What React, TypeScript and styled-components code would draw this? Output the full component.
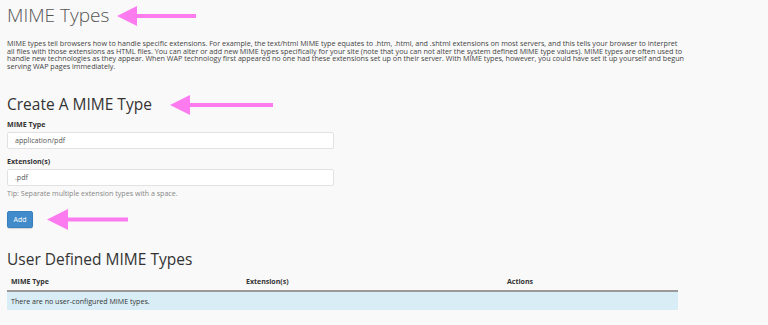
import styled, { createGlobalStyle } from 'styled-components';

const GlobalStyle = createGlobalStyle`
	html, body {
		margin: 0;
		padding: 0;
		background: #f9f9f9;
	}
	body {
		font-family: "Open Sans", "Liberation Sans", sans-serif;
		color: #333;
	}
`

const Page = styled.div`
	width: 768px;
	height: 325px;
	padding: 0 7px;
	box-sizing: border-box;
	overflow: hidden;
`

const TitleRow = styled.div`
	display: flex;
	align-items: center;
	gap: ${props => props.gap || 15}px;
	margin-top: ${props => props.top || 0}px;
`

const PageTitle = styled.h1`
	font-size: 19px;
	font-weight: 300;
	color: #555;
	line-height: 25px;
	margin: 0;
`

const SectionTitle = styled.h2`
	font-size: 15.5px;
	font-weight: 400;
	color: #333;
	line-height: 19px;
	margin: 0;
`

const Intro = styled.p`
	font-size: 7.2px;
	line-height: 7.7px;
	color: #444;
	width: 700px;
	white-space: nowrap;
	margin: 12px 0 0;
`

const Form = styled.form`
	display: flex;
	flex-direction: column;
	margin-top: 5px;
`

const Label = styled.label`
	font-size: 7.1px;
	font-weight: 700;
	color: #333;
	line-height: 9px;
	margin: ${props => props.top || 0}px 0 3px;
`

const Input = styled.input`
	width: 327px;
	height: 17px;
	box-sizing: border-box;
	border: 1px solid #e2e2e2;
	border-radius: 2px;
	background: #fff;
	padding: 0 7px;
	font-family: inherit;
	font-size: 7.1px;
	color: #555;
	outline: none;
`

const Tip = styled.div`
	font-size: 7.1px;
	color: #888;
	line-height: 8px;
	margin-top: 3px;
`

const AddButton = styled.button`
	width: 26px;
	height: 17px;
	border: 1px solid #3a7fc0;
	border-radius: 2px;
	background: #428bca;
	color: #fff;
	font-family: inherit;
	font-size: 7px;
	padding: 0;
	box-shadow: 0 1px 1px rgba(0, 0, 0, 0.15);
`

const Table = styled.div`
	width: 671px;
	margin-top: 8px;
	display: grid;
	grid-template-columns: 235px 261px 1fr;
`

const HeadCell = styled.div`
	font-size: 7px;
	font-weight: 700;
	color: #333;
	padding: 0 4px 4px;
	line-height: 9px;
	border-bottom: 2px solid #9a9a9a;
`

const EmptyRow = styled.div`
	grid-column: 1 / -1;
	background: #d9edf7;
	height: 18px;
	padding: 0 4px;
	display: flex;
	align-items: center;
	font-size: 7.1px;
	color: #333;
`

function Arrow({ width, head = 20 }: { width: number; head?: number }) {
	const mid = head / 2
	return (
		<svg width={width} height={head} viewBox={`0 0 ${width} ${head}`}>
			<polygon points={`0,${mid} ${head},0 ${head},${head}`} fill="#fc7cf0" />
			<rect x={head - 2} y={mid - 2} width={width - head + 2} height={4} fill="#fc7cf0" />
		</svg>
	)
}

function App() {
	return (
		<Page>
			<GlobalStyle />
			<TitleRow top={3} gap={8}>
				<PageTitle>MIME Types</PageTitle>
				<Arrow width={79} head={20} />
			</TitleRow>
			<Intro>
				MIME types tell browsers how to handle specific extensions. For example, the text/html MIME type equates to .htm, .html, and .shtml extensions on most servers, and this tells your browser to interpret<br />
				all files with those extensions as HTML files. You can alter or add new MIME types specifically for your site (note that you can not alter the system defined MIME type values). MIME types are often used to<br />
				handle new technologies as they appear. When WAP technology first appeared no one had these extensions set up on their server. With MIME types, however, you could have set it up yourself and begun<br />
				serving WAP pages immediately.
			</Intro>

			<TitleRow top={24} gap={18}>
				<SectionTitle>Create A MIME Type</SectionTitle>
				<Arrow width={103} head={20} />
			</TitleRow>
			<Form onSubmit={e => e.preventDefault()}>
				<Label>MIME Type</Label>
				<Input defaultValue="application/pdf" />
				<Label top={8}>Extension(s)</Label>
				<Input defaultValue=".pdf" />
				<Tip>Tip: Separate multiple extension types with a space.</Tip>
				<TitleRow top={12} gap={14}>
					<AddButton type="submit">Add</AddButton>
					<Arrow width={81} head={21} />
				</TitleRow>
			</Form>

			<TitleRow top={20}>
				<SectionTitle>User Defined MIME Types</SectionTitle>
			</TitleRow>
			<Table>
				<HeadCell>MIME Type</HeadCell>
				<HeadCell>Extension(s)</HeadCell>
				<HeadCell>Actions</HeadCell>
				<EmptyRow>There are no user-configured MIME types.</EmptyRow>
			</Table>
		</Page>
	)
}

export default App
